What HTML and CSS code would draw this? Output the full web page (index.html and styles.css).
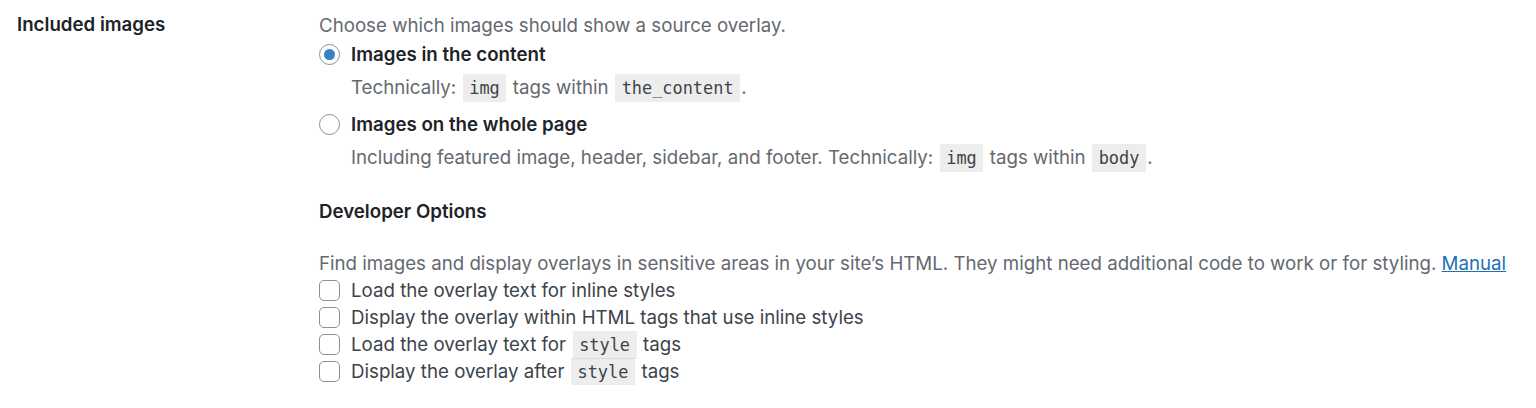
FILE: index.html
```html
<!DOCTYPE html>
<html lang="en">
<head>
<meta charset="utf-8">
<title>Included images</title>
<link rel="stylesheet" href="styles.css">
</head>
<body>
<div class="setting">
  <div class="th">Included images</div>
  <div class="td">
    <p class="desc intro">Choose which images should show a source overlay.</p>
    <label class="radio-row"><span class="radio checked"></span><span class="opt">Images in the content</span></label>
    <p class="desc sub first">Technically: <code>img</code> tags within <code>the_content</code>.</p>
    <label class="radio-row second"><span class="radio"></span><span class="opt">Images on the whole page</span></label>
    <p class="desc sub last">Including featured image, header, sidebar, and footer. Technically: <code>img</code> tags within <code>body</code>.</p>
    <h3 class="heading">Developer Options</h3>
    <p class="desc find">Find images and display overlays in sensitive areas in your site’s HTML. They might need additional code to work or for styling. <a href="#">Manual</a></p>
    <div class="checks">
      <label class="check-row"><span class="box"></span><span class="lbl">Load the overlay text for inline styles</span></label>
      <label class="check-row"><span class="box"></span><span class="lbl">Display the overlay within HTML tags that use inline styles</span></label>
      <label class="check-row"><span class="box"></span><span class="lbl">Load the overlay text for <code>style</code> tags</span></label>
      <label class="check-row"><span class="box"></span><span class="lbl">Display the overlay after <code>style</code> tags</span></label>
    </div>
  </div>
</div>
</body>
</html>
```
FILE: styles.css
```css
html, body {
  margin: 0;
  padding: 0;
  background: #ffffff;
}
body {
  font-family: Inter, "Liberation Sans", Arial, sans-serif;
  font-size: 18.7px;
  color: #3c434a;
}
.setting {
  display: flex;
  padding-left: 17px;
}
.th {
  width: 302px;
  flex: none;
  font-weight: 600;
  color: #1d2327;
  line-height: 26px;
  padding-top: 12px;
}
.td {
  padding-top: 13px;
}
p { margin: 0; }
.desc {
  color: #646970;
  line-height: 26px;
}
.radio-row {
  display: flex;
  align-items: center;
  height: 30px;
  gap: 11px;
}
.radio-row.second { margin-top: 6px; }
.radio {
  width: 21px;
  height: 21px;
  box-sizing: border-box;
  border: 1.3px solid #8c8f94;
  border-radius: 50%;
  background: #fff;
  display: flex;
  align-items: center;
  justify-content: center;
  flex: none;
}
.radio.checked::before {
  content: "";
  width: 11px;
  height: 11px;
  border-radius: 50%;
  background: #3582c4;
}
.opt {
  font-weight: 600;
  color: #1d2327;
}
.sub {
  margin-left: 32px;
  line-height: 30px;
}
.sub.first { margin-top: 4px; }
.sub.last { margin-top: 4px; }
code {
  font-family: "DejaVu Sans Mono", "Liberation Mono", monospace;
  font-size: 16.9px;
  background: rgba(0, 0, 0, 0.07);
  padding: 4px 6.5px 4px;
  margin: 0 1.3px;
  color: #3c434a;
}
.heading {
  margin: 26px 0 0;
  font-size: 18.7px;
  font-weight: 600;
  line-height: 26px;
  color: #1d2327;
}
.find { margin-top: 26px; }
a { color: #2271b1; }
.checks {
  margin-top: 0;
  display: flex;
  flex-direction: column;
}
.check-row {
  display: flex;
  align-items: center;
  height: 27px;
  gap: 11px;
  color: #3c434a;
}
.box {
  width: 21px;
  height: 21px;
  box-sizing: border-box;
  border: 1.3px solid #8c8f94;
  border-radius: 5px;
  background: #fff;
  flex: none;
}
```
